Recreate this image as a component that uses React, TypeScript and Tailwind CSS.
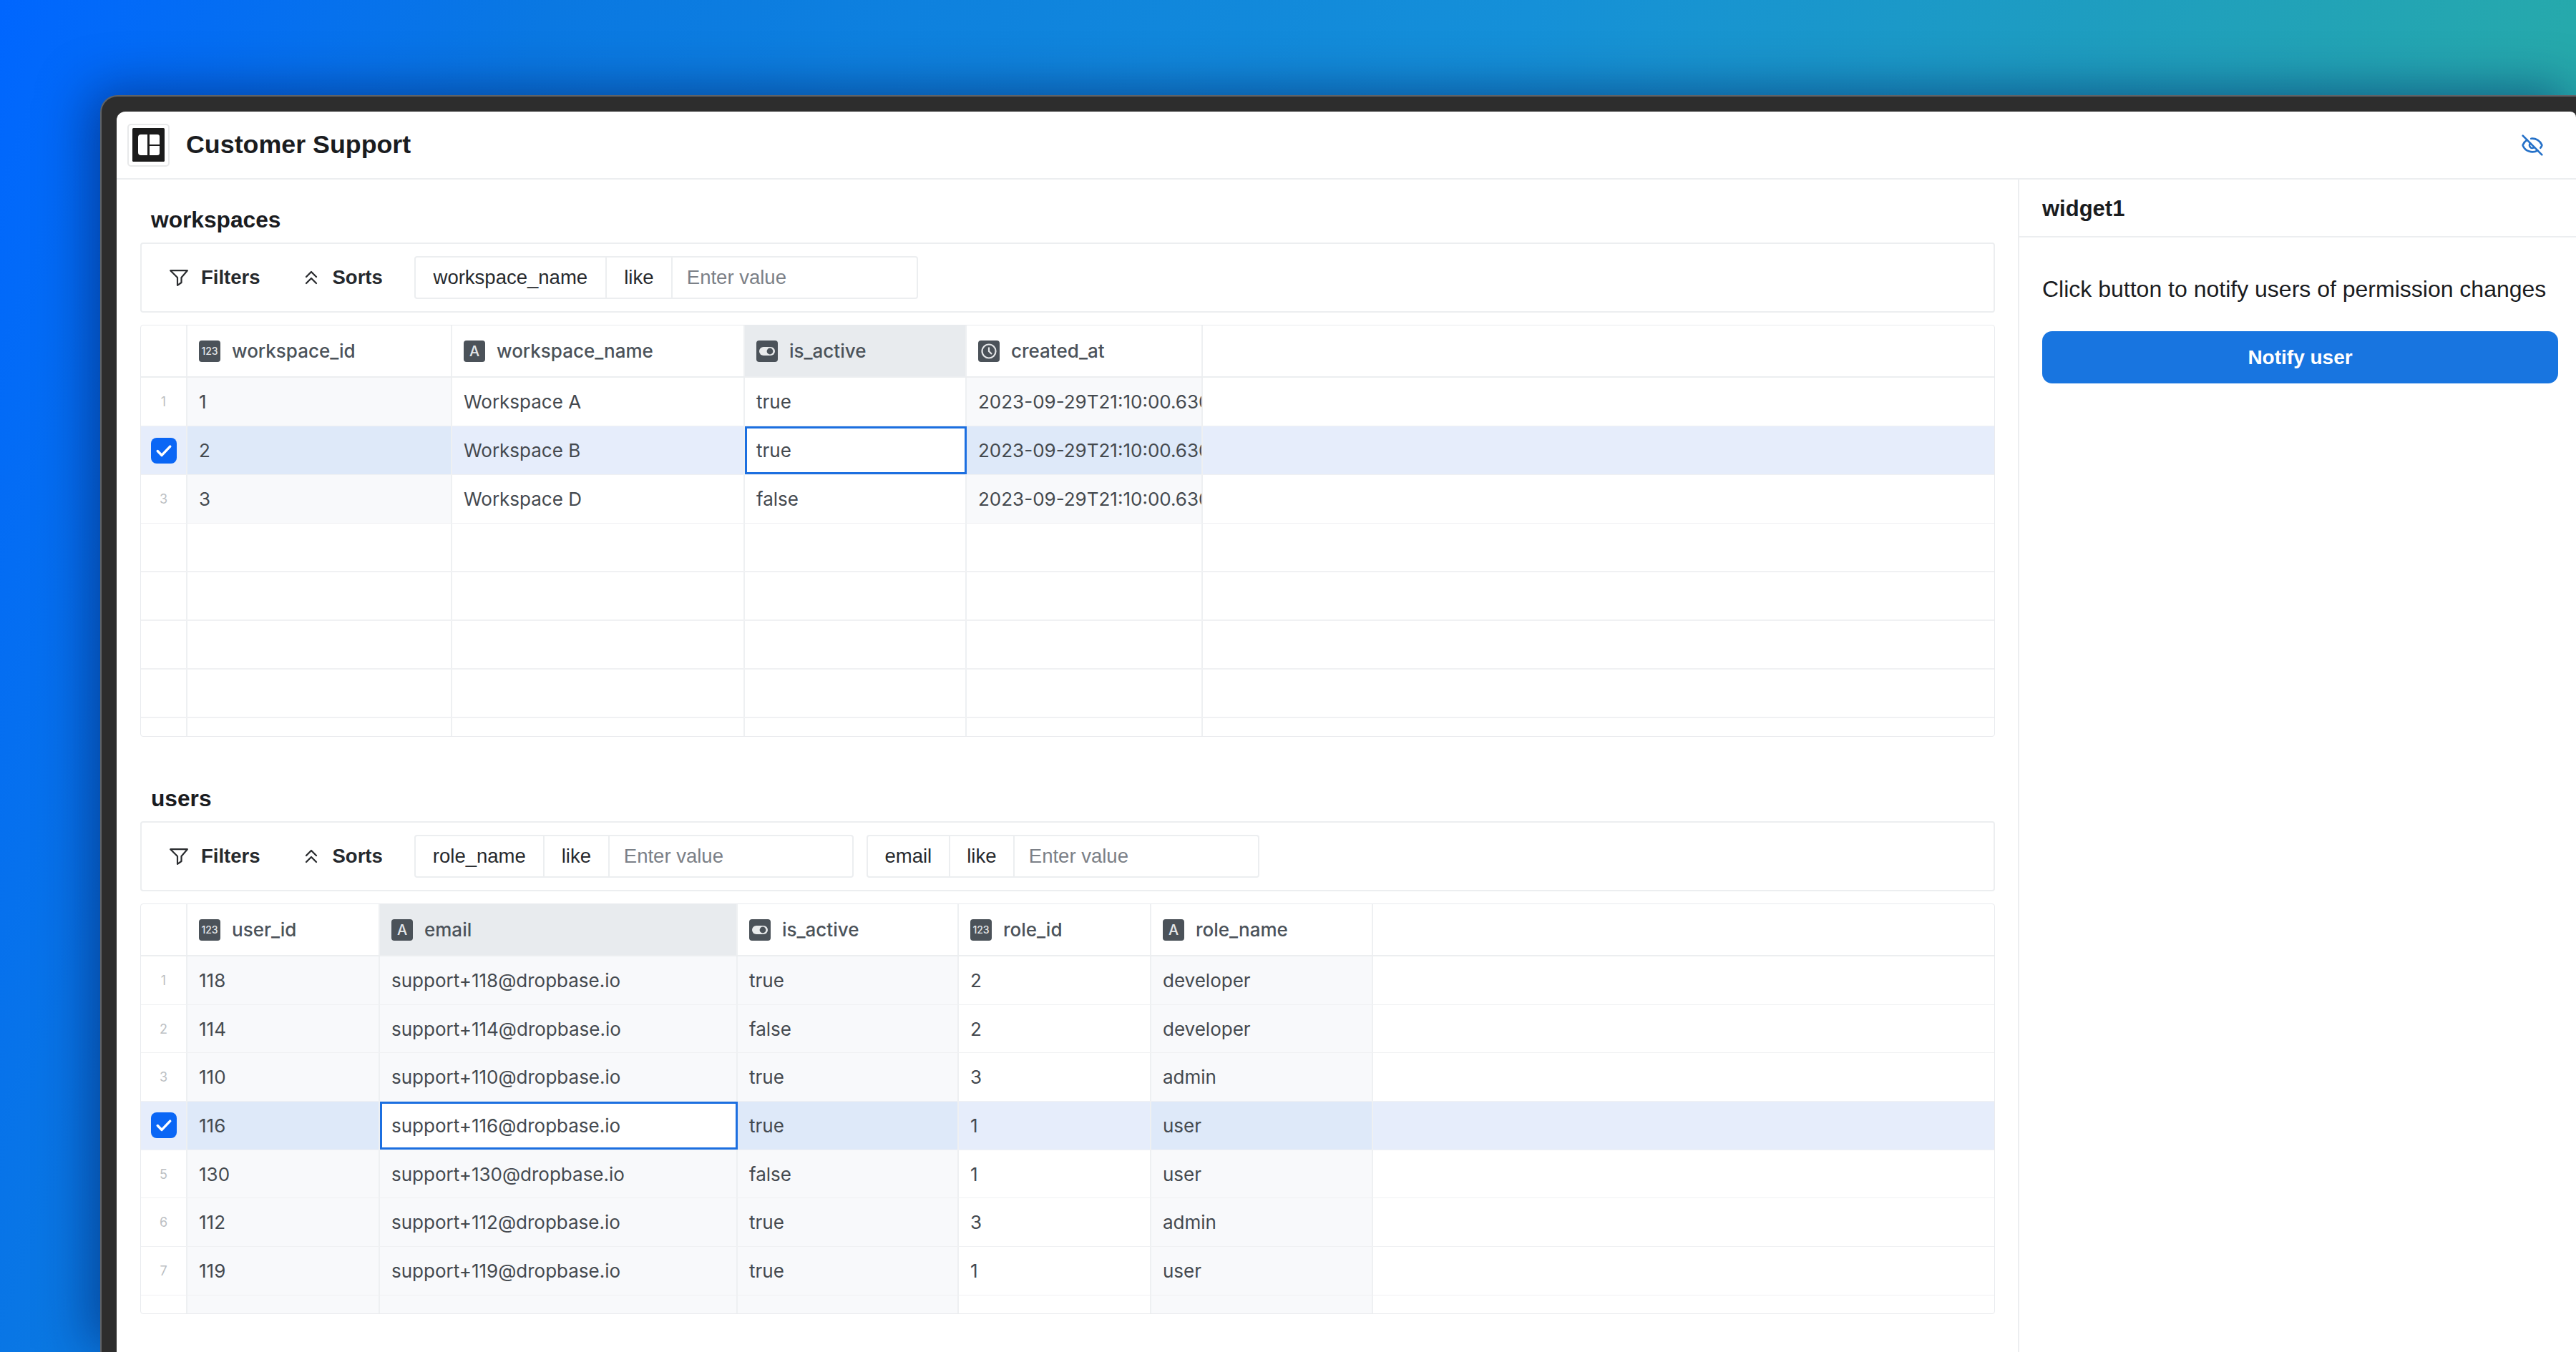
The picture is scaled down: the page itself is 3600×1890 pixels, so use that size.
import { EyeOff } from "lucide-react";

const inter = "font-['Inter',sans-serif]";
const lib = "font-['Liberation_Sans',Arial,sans-serif]";

function TypeIcon({ t }: { t: "num" | "text" | "bool" | "time" }) {
  return (
    <span className="flex h-[30px] w-[30px] shrink-0 items-center justify-center rounded-[4px] bg-[#4b5259] text-white">
      {t === "num" && <span className="text-[14px] font-medium text-[#e4e6e8]">123</span>}
      {t === "text" && <span className="text-[20px] font-medium text-[#e4e6e8]">A</span>}
      {t === "bool" && (
        <svg width="24" height="16" viewBox="0 0 24 16">
          <rect x="1" y="2" width="22" height="12" rx="6" fill="#e9ebec" />
          <circle cx="16" cy="8" r="4.4" fill="#4b5259" />
        </svg>
      )}
      {t === "time" && (
        <svg width="24" height="24" viewBox="0 0 24 24" fill="none" stroke="#e4e6e8" strokeWidth="2.2">
          <circle cx="12" cy="12" r="9.5" />
          <path d="M12 6.5V12l4 4" />
        </svg>
      )}
    </span>
  );
}

type Col = { name: string; type: "num" | "text" | "bool" | "time"; shaded: boolean; active?: boolean };

function Check() {
  return (
    <span className="flex h-[36px] w-[36px] items-center justify-center rounded-[8px] bg-[#0a66f5]">
      <svg width="28" height="28" viewBox="0 0 24 24" fill="none" stroke="white" strokeWidth="3" strokeLinecap="round" strokeLinejoin="round">
        <path d="M4.5 12.5l5 5L19.5 7" />
      </svg>
    </span>
  );
}

function Table({
  columns,
  template,
  rows,
  selRow,
  selCol,
  empty,
  tail,
  rowClass,
}: {
  columns: Col[];
  template: string;
  rows: string[][];
  selRow: number;
  selCol: number;
  empty: number;
  tail: string;
  rowClass: string;
}) {
  const rowCount = rows.length;
  return (
    <div className="rounded-[4px] border border-[#e9ebee]">
      <div className={"grid h-[73px] border-b-2 border-[#eceef0] " + template}>
        <div className="border-r-2 border-[#eef0f2]" />
        {columns.map((c) => (
          <div
            key={c.name}
            className={
              "flex items-center gap-[16px] border-r-2 border-[#eef0f2] pl-[16px] text-[26px] font-medium text-[#4b5259] " +
              (c.active ? "bg-[#e8ebee]" : "bg-white")
            }
          >
            <TypeIcon t={c.type} />
            <span>{c.name}</span>
          </div>
        ))}
        <div />
      </div>
      {rows.map((r, i) => {
        const sel = i === selRow;
        return (
          <div key={i} className={"grid border-b border-[#f0f1f3] " + rowClass + " " + template + (sel ? " bg-[#e6edfb]" : "")}>
            <div className="flex items-center justify-center border-r-2 border-[#eef0f2] text-[18px] text-[#bcbfc3]">
              {sel ? <Check /> : i + 1}
            </div>
            {r.map((v, j) => {
              const focus = sel && j === selCol;
              const shade = columns[j].shaded;
              return (
                <div
                  key={j}
                  className={
                    "flex items-center overflow-hidden pr-[4px] text-[26px] whitespace-nowrap text-[#44494f] " +
                    (focus
                      ? "border-[3px] border-[#1c6fe0] bg-white pl-[13px]"
                      : "border-r-2 border-[#eef0f2] pl-[16px] " + (sel ? (shade ? "bg-[#deE9f9]" : "") : shade ? "bg-[#f8f9fb]" : "bg-white"))
                  }
                >
                  {v}
                </div>
              );
            })}
            <div />
          </div>
        );
      })}
      {Array.from({ length: empty }).map((_, i) => (
        <div key={i} className={"grid border-b-2 border-[#f0f1f3] " + rowClass + " " + template}>
          <div className="border-r-2 border-[#eef0f2]" />
          {columns.map((c) => (
            <div key={c.name} className="border-r-2 border-[#eef0f2]" />
          ))}
          <div />
        </div>
      ))}
      <div className={"grid " + tail + " " + template}>
        <div className="border-r-2 border-[#eef0f2]" />
        {columns.map((c) => (
          <div key={c.name} className={"border-r-2 border-[#eef0f2] " + (c.shaded && rowCount > 3 ? "bg-[#f8f9fb]" : "")} />
        ))}
        <div />
      </div>
    </div>
  );
}

function Pill({ field, fieldW, opW, valueW }: { field: string; fieldW: string; opW: string; valueW: string }) {
  return (
    <div className={"flex h-[60px] items-stretch rounded-[4px] border-2 border-[#eceef0] text-[27.5px] text-[#26292d] " + lib}>
      <div className={"flex items-center justify-center border-r-2 border-[#eceef0] " + fieldW}>{field}</div>
      <div className={"flex items-center justify-center border-r-2 border-[#eceef0] " + opW}>like</div>
      <div className={"flex items-center pl-[20px] text-[#7b8087] " + valueW}>Enter value</div>
    </div>
  );
}

function FilterBar({ children }: { children: React.ReactNode }) {
  return (
    <div className={"flex h-[98px] items-center rounded-[4px] border-2 border-[#eceef0] pl-[39px] text-[27.5px] font-bold text-[#26292d] " + lib}>
      <div className="flex items-center gap-[18px]">
        <svg width="26" height="23" viewBox="0 0 26 23" fill="none" stroke="#2a2c2f" strokeWidth="2.2" strokeLinejoin="round">
          <path d="M1.2 1.2h23.6L16.5 11v7l-5.5 3.8V11z" />
        </svg>
        Filters
      </div>
      <div className="ml-[62px] flex items-center gap-[21px]">
        <svg width="18" height="20" viewBox="0 0 18 20" fill="none" stroke="#2a2c2f" strokeWidth="2.3" strokeLinecap="round" strokeLinejoin="round">
          <path d="M2 9l7-7 7 7M2 18l7-7 7 7" />
        </svg>
        Sorts
      </div>
      <div className="ml-[44px] flex items-center gap-[18px] font-normal">{children}</div>
    </div>
  );
}

const wsCols: Col[] = [
  { name: "workspace_id", type: "num", shaded: true },
  { name: "workspace_name", type: "text", shaded: false },
  { name: "is_active", type: "bool", shaded: false, active: true },
  { name: "created_at", type: "time", shaded: true },
];
const wsRows = [
  ["1", "Workspace A", "true", "2023-09-29T21:10:00.630"],
  ["2", "Workspace B", "true", "2023-09-29T21:10:00.630"],
  ["3", "Workspace D", "false", "2023-09-29T21:10:00.630"],
];
const uCols: Col[] = [
  { name: "user_id", type: "num", shaded: true },
  { name: "email", type: "text", shaded: true, active: true },
  { name: "is_active", type: "bool", shaded: true },
  { name: "role_id", type: "num", shaded: false },
  { name: "role_name", type: "text", shaded: true },
];
const uRows = [
  ["118", "support+118@dropbase.io", "true", "2", "developer"],
  ["114", "support+114@dropbase.io", "false", "2", "developer"],
  ["110", "support+110@dropbase.io", "true", "3", "admin"],
  ["116", "support+116@dropbase.io", "true", "1", "user"],
  ["130", "support+130@dropbase.io", "false", "1", "user"],
  ["112", "support+112@dropbase.io", "true", "3", "admin"],
  ["119", "support+119@dropbase.io", "true", "1", "user"],
];

export default function App() {
  return (
    <div className={"h-[1890px] w-[3600px] overflow-hidden bg-[linear-gradient(110deg,#0066ff_0%,#0a78e2_18%,#1590d8_50%,#26a9ac_84%,#2bb0a2_100%)] pt-[133px] pl-[140px] " + inter}>
      <div className="h-[1757px] rounded-tl-[24px] border-t-2 border-l-2 border-[#5f6367] bg-[#2d2d2d] pt-[21px] pl-[21px] shadow-[-14px_-6px_70px_rgba(0,25,90,0.55)]">
        <div className="flex h-full flex-col rounded-tl-[12px] rounded-tr-[8px] bg-white">
          <header className="flex h-[95px] shrink-0 items-center border-b-2 border-[#eceef0] pr-[45px] pl-[15px]">
            <div className="flex h-[60px] w-[59px] items-center justify-center rounded-[5px] border-2 border-[#e8e9ea]">
              <svg width="45" height="47" viewBox="0 0 45 47">
                <rect width="45" height="47" rx="1.5" fill="#1b1b1b" />
                <path d="M12 9h9v29h-9q-4 0-4-4V13q0-4 4-4zM24 9h11q3 0 3 3v11H24zM24 25h14v10q0 3-3 3H24z" fill="#fff" />
              </svg>
            </div>
            <h1 className={"ml-[23px] text-[35.8px] font-bold text-[#1a1c1f] " + lib}>Customer Support</h1>
            <EyeOff className="ml-auto text-[#2470c8]" size={32} strokeWidth={2} />
          </header>
          <div className="flex min-h-0 flex-1">
            <main className="w-[2659px] shrink-0 border-r-2 border-[#eceef0] pr-[32px] pl-[33px]">
              <h2 className={"pt-[36px] pb-[12px] pl-[15px] text-[31.7px] leading-[40px] font-bold text-[#1a1c1f] " + lib}>workspaces</h2>
              <FilterBar>
                <Pill field="workspace_name" fieldW="w-[267px]" opW="w-[92px]" valueW="w-[341px]" />
              </FilterBar>
              <div className="mt-[17px]">
                <Table
                  columns={wsCols}
                  template="grid-cols-[65px_370px_409px_310px_330px_1fr]"
                  rows={wsRows}
                  selRow={1}
                  selCol={2}
                  empty={4}
                  tail="h-[25px]"
                  rowClass="h-[68px]"
                />
              </div>
              <h2 className={"pt-[66px] pb-[12px] pl-[15px] text-[31.7px] leading-[40px] font-bold text-[#1a1c1f] " + lib}>users</h2>
              <FilterBar>
                <Pill field="role_name" fieldW="w-[180px]" opW="w-[91px]" valueW="w-[339px]" />
                <Pill field="email" fieldW="w-[115px]" opW="w-[90px]" valueW="w-[340px]" />
              </FilterBar>
              <div className="mt-[17px]">
                <Table
                  columns={uCols}
                  template="grid-cols-[65px_269px_500px_309px_269px_310px_1fr]"
                  rows={uRows}
                  selRow={3}
                  selCol={1}
                  empty={0}
                  tail="h-[25px]"
                  rowClass="h-[67.7px]"
                />
              </div>
            </main>
            <aside className={"flex-1 " + lib}>
              <div className="flex h-[81px] items-center border-b-2 border-[#eceef0] pt-[4px] pl-[32px] text-[31px] font-bold text-[#1a1c1f]">widget1</div>
              <div className="pt-[50px] pr-[25px] pl-[32px]">
                <p className="text-[32px] leading-[44px] whitespace-nowrap text-[#1a1c1f]">Click button to notify users of permission changes</p>
                <button className="mt-[37px] h-[73px] w-full rounded-[14px] bg-[#1875e0] text-[28px] font-bold text-white">Notify user</button>
              </div>
            </aside>
          </div>
        </div>
      </div>
    </div>
  );
}
